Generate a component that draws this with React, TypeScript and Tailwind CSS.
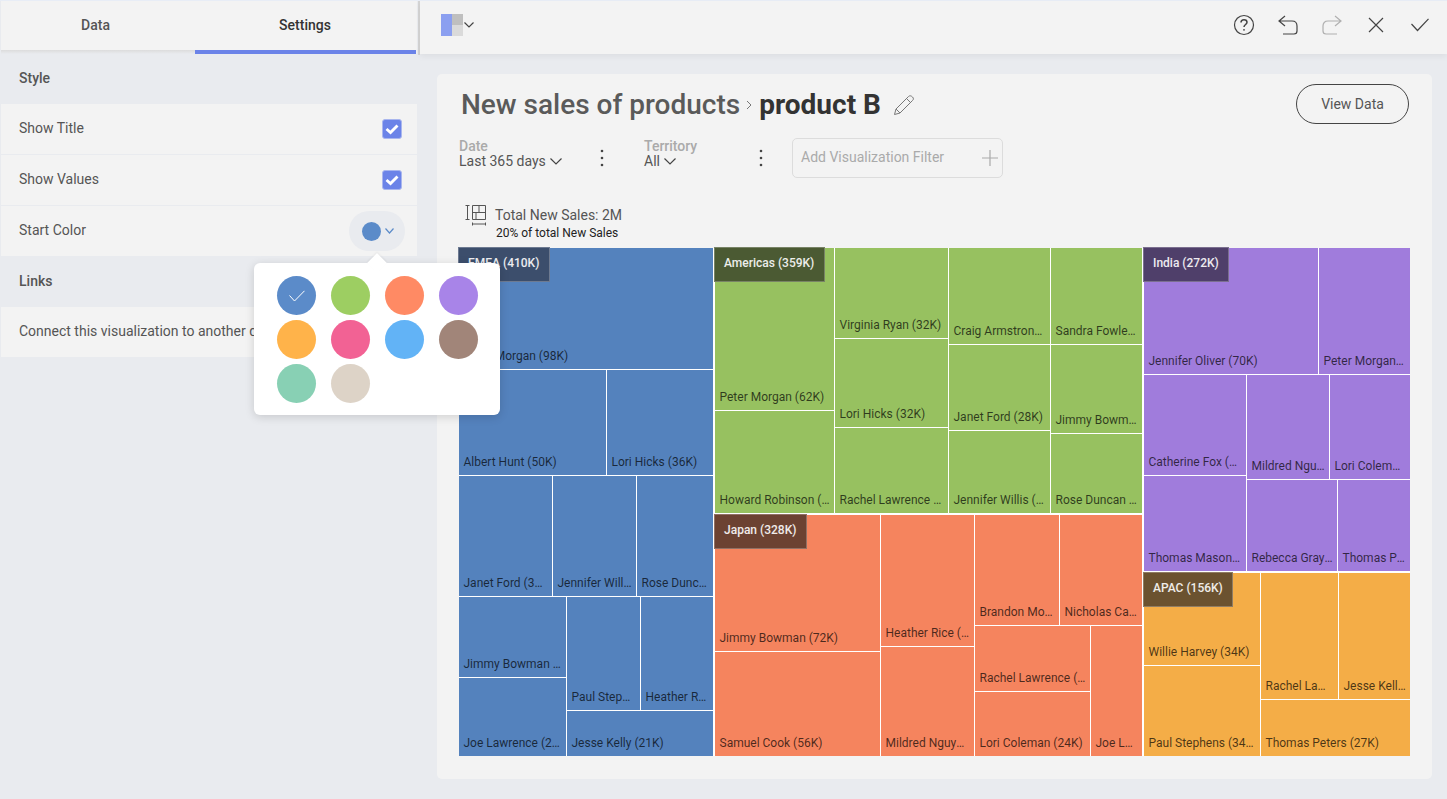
import React from 'react';

type TreeNode = { s: number; t?: string; d?: 'row' | 'col'; c?: TreeNode[] };

const leaf = (s: number, t: string): TreeNode => ({ s, t });
const row = (s: number, c: TreeNode[]): TreeNode => ({ s, d: 'row', c });
const col = (s: number, c: TreeNode[]): TreeNode => ({ s, d: 'col', c });

const EMEA = col(254, [
  leaf(121, 'Peter Morgan (98K)'),
  row(105, [leaf(147, 'Albert Hunt (50K)'), leaf(106, 'Lori Hicks (36K)')]),
  row(120, [leaf(93, 'Janet Ford (35K)'), leaf(83, 'Jennifer Willis (33K)'), leaf(76, 'Rose Duncan (31K)')]),
  row(159, [
    col(107, [leaf(80, 'Jimmy Bowman (30K)'), leaf(78, 'Joe Lawrence (26K)')]),
    col(146, [
      row(113, [leaf(73, 'Paul Stephens (25K)'), leaf(72, 'Heather Rice (24K)')]),
      leaf(45, 'Jesse Kelly (21K)'),
    ]),
  ]),
]);

const AMERICAS = row(265, [
  col(119, [leaf(162, 'Peter Morgan (62K)'), leaf(102, 'Howard Robinson (40K)')]),
  col(113, [leaf(90, 'Virginia Ryan (32K)'), leaf(88, 'Lori Hicks (32K)'), leaf(85, 'Rachel Lawrence (31K)')]),
  col(101, [leaf(96, 'Craig Armstrong (29K)'), leaf(85, 'Janet Ford (28K)'), leaf(82, 'Jennifer Willis (27K)')]),
  col(91, [leaf(96, 'Sandra Fowler (27K)'), leaf(88, 'Jimmy Bowman (26K)'), leaf(79, 'Rose Duncan (24K)')]),
]);

const JAPAN = row(241, [
  col(165, [leaf(136, 'Jimmy Bowman (72K)'), leaf(104, 'Samuel Cook (56K)')]),
  col(93, [leaf(131, 'Heather Rice (40K)'), leaf(109, 'Mildred Nguyen (35K)')]),
  col(167, [
    row(110, [leaf(84, 'Brandon Morgan (29K)'), leaf(82, 'Nicholas Carter (28K)')]),
    row(130, [
      col(115, [leaf(65, 'Rachel Lawrence (25K)'), leaf(64, 'Lori Coleman (24K)')]),
      leaf(51, 'Joe Lawrence (19K)'),
    ]),
  ]),
]);

const INDIA = col(323, [
  row(126, [leaf(174, 'Jennifer Oliver (70K)'), leaf(91, 'Peter Morgan (37K)')]),
  row(196, [
    col(102, [leaf(100, 'Catherine Fox (34K)'), leaf(95, 'Thomas Mason (32K)')]),
    col(163, [
      row(104, [leaf(82, 'Mildred Nguyen (28K)'), leaf(80, 'Lori Coleman (27K)')]),
      row(91, [leaf(90, 'Rebecca Gray (26K)'), leaf(72, 'Thomas Peters (22K)')]),
    ]),
  ]),
]);

const APAC = row(183, [
  col(116, [leaf(92, 'Willie Harvey (34K)'), leaf(90, 'Paul Stephens (34K)')]),
  col(149, [
    row(126, [leaf(77, 'Rachel Lawrence (32K)'), leaf(71, 'Jesse Kelly (29K)')]),
    leaf(56, 'Thomas Peters (27K)'),
  ]),
]);

const SWATCHES = ['#5b8bc9', '#9dce62', '#ff8a64', '#a884e8', '#ffb34a', '#f26294', '#62b3f6', '#a18579', '#88d0b4', '#ddd3c7'];

// nodo del treemap: s es el tamaño en el eje del padre
const Tile: React.FC<{ node: TreeNode; parent: 'row' | 'col'; color: string }> = ({ node, parent, color }) => {
  const sizeStyle = parent === 'row' ? { width: node.s } : { height: node.s };
  if (node.c) {
    return (
      <div className={`flex gap-px shrink-0 ${node.d === 'row' ? 'flex-row' : 'flex-col'}`} style={sizeStyle}>
        {node.c.map((child, i) => (
          <Tile key={i} node={child} parent={node.d as 'row' | 'col'} color={color} />
        ))}
      </div>
    );
  }
  return (
    <div className="flex items-end shrink-0 overflow-hidden" style={{ ...sizeStyle, backgroundColor: color }}>
      <span className="block w-full truncate pl-[4.5px] pr-[4px] pb-[6px] text-xs leading-[14px] text-black/70">{node.t}</span>
    </div>
  );
};

const Group: React.FC<{ node: TreeNode; parent: 'row' | 'col'; color: string; label: string; badge: string }> = ({
  node,
  parent,
  color,
  label,
  badge,
}) => (
  <div className="relative shrink-0 flex" style={parent === 'row' ? { width: node.s } : { height: node.s }}>
    <div className="w-full h-full flex [&>div]:flex-1">
      <Tile node={node} parent={node.d === 'row' ? 'col' : 'row'} color={color} />
    </div>
    <div
      className="absolute -left-px -top-px h-[35px] flex items-center pl-[9px] pr-[9.5px] pb-[4px] text-xs font-medium text-white/90 border border-white/25"
      style={{ backgroundColor: badge }}
    >
      {label}
    </div>
  </div>
);

const Checkbox = () => (
  <span className="w-5 h-5 rounded-[3px] bg-[#6b83e8] border border-[#a9b6ee] flex items-center justify-center">
    <svg width="14" height="12" viewBox="0 0 14 12" fill="none" stroke="white" strokeWidth="2.8">
      <path d="M1.5 6 L5.5 9.6 L12.5 2.4" />
    </svg>
  </span>
);

const Kebab = () => (
  <svg width="4" height="18" viewBox="0 0 4 18" fill="#444" className="shrink-0">
    <circle cx="2" cy="2" r="1.3" />
    <circle cx="2" cy="9" r="1.3" />
    <circle cx="2" cy="16" r="1.3" />
  </svg>
);

const Chevron: React.FC<{ w: number; h: number; color: string; className?: string }> = ({ w, h, color, className }) => (
  <svg width={w} height={h} viewBox={`0 0 ${w} ${h}`} fill="none" stroke={color} strokeWidth="1.2" className={className}>
    <path d={`M0.5 0.5 L${w / 2} ${h - 1} L${w - 0.5} 0.5`} />
  </svg>
);

export default function App() {
  return (
    <div className="relative w-[1447px] h-[799px] overflow-hidden flex flex-col bg-[#e9ebef] font-['Roboto',sans-serif] text-sm text-[#555]">
      {/* barra superior */}
      <div className="flex h-[55px] shrink-0 border-t border-[#e8edf6]">
        <div className="ml-px w-[416px] h-[53px] flex bg-[#f3f3f3] shrink-0">
          <div className="w-[194px] flex flex-col">
            <div className="flex-1 flex items-center justify-center pr-[5px] pb-[2px] font-medium text-[#555]">Data</div>
            <div className="h-1 bg-gradient-to-b from-[#dcdcdc] to-[#e9ebef]" />
          </div>
          <div className="w-[221px] flex flex-col">
            <div className="flex-1 flex items-center justify-center pr-px pb-[2px] font-medium text-[#333]">Settings</div>
            <div className="h-1 bg-[#6b83e8]" />
          </div>
        </div>
        <div className="w-[2px] h-[54px] ml-px bg-[#d4d4d4] shrink-0" />
        <div className="flex-1 h-[53px] bg-[#f3f3f3] shadow-[0_3px_6px_rgba(0,0,0,0.05)] flex items-center justify-between pl-[21px] pr-[18px]">
          <div className="flex items-center mb-[5px]">
            <div className="w-[22px] h-[22px] flex">
              <div className="w-[11px] bg-[#8b9ff0]" />
              <div className="w-[11px] flex flex-col">
                <div className="h-[11px] bg-[#bfbfbf]" />
                <div className="h-[11px] bg-[#dadada]" />
              </div>
            </div>
            <Chevron w={10} h={6} color="#444" className="ml-px" />
          </div>
          <div className="flex items-center mb-[5px]">
            <svg width="22" height="22" viewBox="0 0 22 22" fill="none" stroke="#444" strokeWidth="1.2">
              <circle cx="11" cy="11" r="9.5" />
              <path d="M8 8.6 C8 6.6 9.4 5.7 11 5.7 C12.7 5.7 14 6.8 14 8.3 C14 10.4 11 10.6 11 13" strokeWidth="1.5" />
              <circle cx="11" cy="15.8" r="0.9" fill="#444" stroke="none" />
            </svg>
            <svg width="20" height="20" viewBox="0 0 20 20" fill="none" stroke="#444" strokeWidth="1.2" className="ml-[23px]">
              <path d="M7 1 L1 6 L7 11 M1 6 H14 C17 6 19 8 19 11 V16 C19 18 18 19 16 19 H5" />
            </svg>
            <svg width="20" height="20" viewBox="0 0 20 20" fill="none" stroke="#b0b0b0" strokeWidth="1.2" className="ml-[24px]">
              <path d="M13 1 L19 6 L13 11 M19 6 H6 C3 6 1 8 1 11 V16 C1 18 2 19 4 19 H15" />
            </svg>
            <svg width="16" height="16" viewBox="0 0 16 16" fill="none" stroke="#444" strokeWidth="1.2" className="ml-[26px]">
              <path d="M1 1 L15 15 M15 1 L1 15" />
            </svg>
            <svg width="18" height="14" viewBox="0 0 18 14" fill="none" stroke="#444" strokeWidth="1.2" className="ml-[27px]">
              <path d="M0.5 6 L6.5 12.5 L17.5 0.8" />
            </svg>
          </div>
        </div>
      </div>

      <div className="flex flex-1 min-h-0">
        {/* panel de ajustes */}
        <div className="ml-px w-[416px] shrink-0 text-[#555]">
          <div className="h-[49px] flex items-center pl-[18px] pb-[3px] font-medium text-[#555]">Style</div>
          <div className="h-[51px] flex items-center justify-between pl-[18px] pr-[15px] bg-[#f3f3f3] border-b border-[#e9ebef]">
            <span className="pb-[2px]">Show Title</span>
            <Checkbox />
          </div>
          <div className="h-[51px] flex items-center justify-between pl-[18px] pr-[15px] bg-[#f3f3f3] border-b border-[#e9ebef]">
            <span className="pb-[2px]">Show Values</span>
            <Checkbox />
          </div>
          <div className="h-[50px] flex items-center justify-between pl-[18px] pr-[12px] bg-[#f3f3f3]">
            <span className="pb-[2px]">Start Color</span>
            <div className="w-[56px] h-[40px] rounded-full bg-[#e9ebef] flex items-center pl-[13px]">
              <span className="w-[19px] h-[19px] rounded-full bg-[#5b8bc9]" />
              <Chevron w={9} h={6} color="#5b8bc9" className="ml-[4px]" />
            </div>
          </div>
          <div className="h-[51px] flex items-center pl-[18px] pb-[2px] font-medium text-[#555]">Links</div>
          <div className="h-[50px] flex items-center pl-[18px] pb-[2px] bg-[#f3f3f3]">Connect this visualization to another dashboard</div>
        </div>

        {/* tarjeta de la visualización */}
        <div className="ml-[20px] mt-[19px] w-[995px] h-[705px] rounded-[5px] bg-[#f3f3f3] px-[22px] pt-[10px] shrink-0">
          <div className="h-[40px] flex items-center justify-between">
            <div className="flex items-center ml-[2px] pt-px">
              <span className="text-[28px] font-medium text-[#5a5a5a]">New sales of products</span>
              <svg width="6" height="10" viewBox="0 0 6 10" fill="none" stroke="#777" className="ml-[6px] mr-[7px] mt-px">
                <path d="M1 1 L5 5 L1 9" />
              </svg>
              <span className="text-[28px] font-bold text-[#333]">product B</span>
              <svg width="22" height="22" viewBox="0 0 22 22" fill="none" stroke="#777" strokeWidth="1" className="ml-[12px]">
                <path d="M1.5 20.5 L3 15 L15.5 2.5 C16.5 1.5 18 1.5 19.5 3 C20.7 4.2 20.7 5.5 19.5 6.5 L7 19 Z M13.5 4.5 L17.5 8.5 M3 15 L7 19" />
              </svg>
            </div>
            <div className="w-[113px] h-[40px] mr-px rounded-full border border-[#444] flex items-center justify-center text-[#555]">View Data</div>
          </div>

          <div className="mt-[14px] h-[40px] flex">
            <div className="w-[185px] flex items-center">
              <div className="w-[141px] self-start pt-px">
                <div className="h-[14px] leading-[14px] font-medium text-[#aaa]">Date</div>
                <div className="mt-px h-[15px] leading-[15px] flex items-center">
                  Last 365 days
                  <Chevron w={12} h={7} color="#444" className="ml-[4px]" />
                </div>
              </div>
              <Kebab />
            </div>
            <div className="w-[148px] flex items-center">
              <div className="w-[115px] self-start pt-px">
                <div className="h-[14px] leading-[14px] font-medium text-[#aaa]">Territory</div>
                <div className="mt-px h-[15px] leading-[15px] flex items-center">
                  All
                  <Chevron w={12} h={7} color="#444" className="ml-[4px]" />
                </div>
              </div>
              <Kebab />
            </div>
            <div className="w-[211px] h-[40px] rounded-[5px] border border-[#dcdcdc] flex items-center justify-between pl-2 pr-[4px] text-[#aaa]">
              <span className="pb-[2px]">Add Visualization Filter</span>
              <svg width="16" height="16" viewBox="0 0 16 16" stroke="#aaa" strokeWidth="1.2">
                <path d="M8 0 V16 M0 8 H16" />
              </svg>
            </div>
          </div>

          <div className="mt-[26px] h-[44px] flex">
            <svg width="22" height="22" viewBox="0 0 22 22" fill="none" stroke="#555" strokeWidth="1" className="ml-[6px] shrink-0">
              <path d="M0.5 1.5 H4.5 M2.5 1.5 V15.5 M0.5 15.5 H4.5" />
              <path d="M7.5 1.5 H20.5 V15.5 H7.5 Z M7.5 8.5 H20.5 M14 1.5 V8.5 M11 8.5 V15.5" />
              <path d="M7.5 18.5 V21.5 M20.5 18.5 V21.5 M7.5 20 H20.5" />
            </svg>
            <div className="ml-[8px] mt-[3px]">
              <div className="leading-4 text-[#555]">Total New Sales: 2M</div>
              <div className="mt-[3px] pl-px text-xs leading-[14px] text-[#222]">20% of total New Sales</div>
            </div>
          </div>

          {/* treemap */}
          <div className="w-[951px] h-[508px] flex gap-[2px] bg-white">
            <Group node={EMEA} parent="row" color="#5482bd" label="EMEA (410K)" badge="#3c4e6c" />
            <div className="w-[427px] flex flex-col gap-[2px] shrink-0">
              <Group node={AMERICAS} parent="col" color="#97c160" label="Americas (359K)" badge="#4b5a33" />
              <Group node={JAPAN} parent="col" color="#f5845e" label="Japan (328K)" badge="#6c4232" />
            </div>
            <div className="w-[266px] flex flex-col gap-[2px] shrink-0">
              <Group node={INDIA} parent="col" color="#a07cdc" label="India (272K)" badge="#4f3f6a" />
              <Group node={APAC} parent="col" color="#f4ad47" label="APAC (156K)" badge="#6b5230" />
            </div>
          </div>
        </div>
      </div>

      {/* selector de color */}
      <div className="absolute left-[254px] top-[263px] w-[246px] h-[152px] z-20 bg-white rounded-[6px] shadow-[0_2px_10px_rgba(0,0,0,0.15)] pl-[23px] pt-[13px]">
        <div className="absolute left-[116px] -top-[7px] w-[14px] h-[14px] rotate-45 bg-white shadow-[-1px_-1px_2px_rgba(0,0,0,0.05)]" />
        <div className="relative grid grid-cols-[39px_39px_39px_39px] auto-rows-[39px] gap-x-[15px] gap-y-[5px]">
          {SWATCHES.map((color, i) => (
            <div key={color} className="rounded-full flex items-center justify-center" style={{ backgroundColor: color }}>
              {i === 0 && (
                <svg width="16" height="12" viewBox="0 0 16 12" fill="none" stroke="white" strokeWidth="1">
                  <path d="M0.5 5.5 L5.5 11 L15.5 0.8" />
                </svg>
              )}
            </div>
          ))}
        </div>
      </div>
    </div>
  );
}
